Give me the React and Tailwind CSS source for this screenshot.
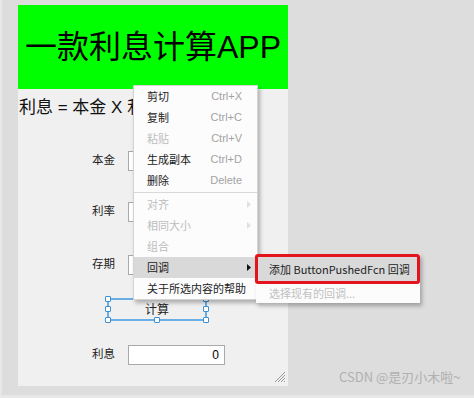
const menuItems = [
  { label: "剪切", shortcut: "Ctrl+X" },
  { label: "复制", shortcut: "Ctrl+C" },
  { label: "粘贴", shortcut: "Ctrl+V", disabled: true },
  { label: "生成副本", shortcut: "Ctrl+D" },
  { label: "删除", shortcut: "Delete" },
  { separator: true },
  { label: "对齐", disabled: true, arrow: true },
  { label: "相同大小", disabled: true, arrow: true },
  { label: "组合", disabled: true },
  { label: "回调", arrow: true, active: true },
  { label: "关于所选内容的帮助" },
];

function Arrow({ color }) {
  return (
    <svg width="4" height="7" viewBox="0 0 4 7" className="absolute right-[6px] top-[7px]">
      <path d="M0 0 L4 3.5 L0 7 Z" fill={color} />
    </svg>
  );
}

function Handle({ className }) {
  return (
    <span
      className={`absolute w-[6px] h-[6px] bg-white border border-[#3d8fd6] rounded-[1px] ${className}`}
    />
  );
}

function Field({ label, value, top }) {
  return (
    <div className={`flex items-center h-[20px] ${top}`}>
      <span className="w-[97px] text-right text-[11.5px] text-[#222]">{label}</span>
      <div className="ml-[13px] w-[97px] h-[20px] bg-white border border-[#a9a9a9] flex items-center justify-end pr-[5px] text-[12px] text-black">
        {value}
      </div>
    </div>
  );
}

export default function App() {
  return (
    <div
      className="relative w-[474px] h-[398px] bg-[#dddddd] overflow-hidden border-b-[3px] border-l-[2px] border-[#e8e8e8]"
      style={{ fontFamily: '"Liberation Sans", "Noto Sans CJK SC", sans-serif' }}
    >
      <div className="ml-[16px] pt-[5px]">
        <div className="relative w-[270px] h-[381px] bg-[#f0f0f0] flex flex-col">
          <div className="h-[84px] bg-[#00ff00] flex items-center justify-center text-[32px] text-black leading-none">
            一款利息计算APP
          </div>
          <div className="h-[38px] flex items-center pl-[1px] text-[17px] text-[#111] whitespace-nowrap">
            利息 = 本金 X 利率 X 存期
          </div>

          <Field label="本金" value="" top="mt-[24px]" />
          <Field label="利率" value="" top="mt-[31px]" />
          <Field label="存期" value="" top="mt-[33px]" />

          <div className="mt-[23px] pl-[89px]">
            <div className="relative w-[100px] h-[23px] border-2 border-[#6aaee6] flex items-center justify-center text-[12px] text-[#222]">
              计算
              <Handle className="-left-[4px] -top-[4px]" />
              <Handle className="-right-[4px] -top-[4px]" />
              <Handle className="-left-[4px] -bottom-[4px]" />
              <Handle className="-right-[4px] -bottom-[4px]" />
              <Handle className="-left-[4px] top-[6px]" />
              <Handle className="-right-[4px] top-[6px]" />
              <Handle className="left-[45px] -bottom-[4px]" />
            </div>
          </div>

          <Field label="利息" value="0" top="mt-[24px]" />

          <svg width="12" height="12" viewBox="0 0 12 12" className="absolute right-[2px] bottom-[3px]">
            <path d="M11 1 L1 11 M11 4 L4 11 M11 7 L7 11 M11 10 L10 11" stroke="#9a9a9a" strokeWidth="1" />
          </svg>
        </div>
      </div>

      {/* context menu */}
      <div
        className="absolute left-[131px] top-[85px] w-[125px] bg-[#fcfcfc] border border-[#d4d4d4] shadow-[2px_3px_4px_rgba(0,0,0,0.28)] text-[11px] whitespace-nowrap"
        style={{ fontFamily: '"Noto Sans CJK SC", "Liberation Sans", sans-serif' }}
      >
        {menuItems.map((it, i) =>
          it.separator ? (
            <div key={i} className="h-px bg-[#d8d8d8] my-[1px]" />
          ) : (
            <div
              key={i}
              className={`relative h-[21px] flex items-center justify-between pl-[13px] pr-[15px] ${
                it.active ? "bg-[#d9d9d9]" : ""
              } ${it.disabled ? "text-[#bcbcbc]" : "text-[#222]"}`}
            >
              <span>{it.label}</span>
              {it.shortcut && (
                <span className="text-[#a3a3a3]" style={{ fontFamily: '"Liberation Sans", sans-serif' }}>
                  {it.shortcut}
                </span>
              )}
              {it.arrow && <Arrow color={it.disabled ? "#e0e0e0" : "#111"} />}
            </div>
          )
        )}
      </div>

      {/* submenu */}
      <div
        className="absolute left-[254px] top-[254px] w-[164px] bg-[#fcfcfc] shadow-[2px_3px_4px_rgba(0,0,0,0.28)] text-[11px] whitespace-nowrap"
        style={{ fontFamily: '"Noto Sans CJK SC", "Liberation Sans", sans-serif' }}
      >
        <div className="h-[30px] border-[3px] border-[#e3141d] rounded-[3px] -ml-[1px] bg-[#d9d9d9] flex items-center pl-[11px] text-[#222]">
          添加 ButtonPushedFcn 回调
        </div>
        <div className="h-[19px] flex items-center pl-[13px] text-[#c0c0c0]">选择现有的回调...</div>
      </div>

      <div
        className="absolute left-[337px] top-[367px] text-[13px] text-[#b0b0b0]"
        style={{ fontFamily: '"Noto Sans CJK SC", "Liberation Sans", sans-serif' }}
      >
        CSDN @是刃小木啦~
      </div>
    </div>
  );
}
